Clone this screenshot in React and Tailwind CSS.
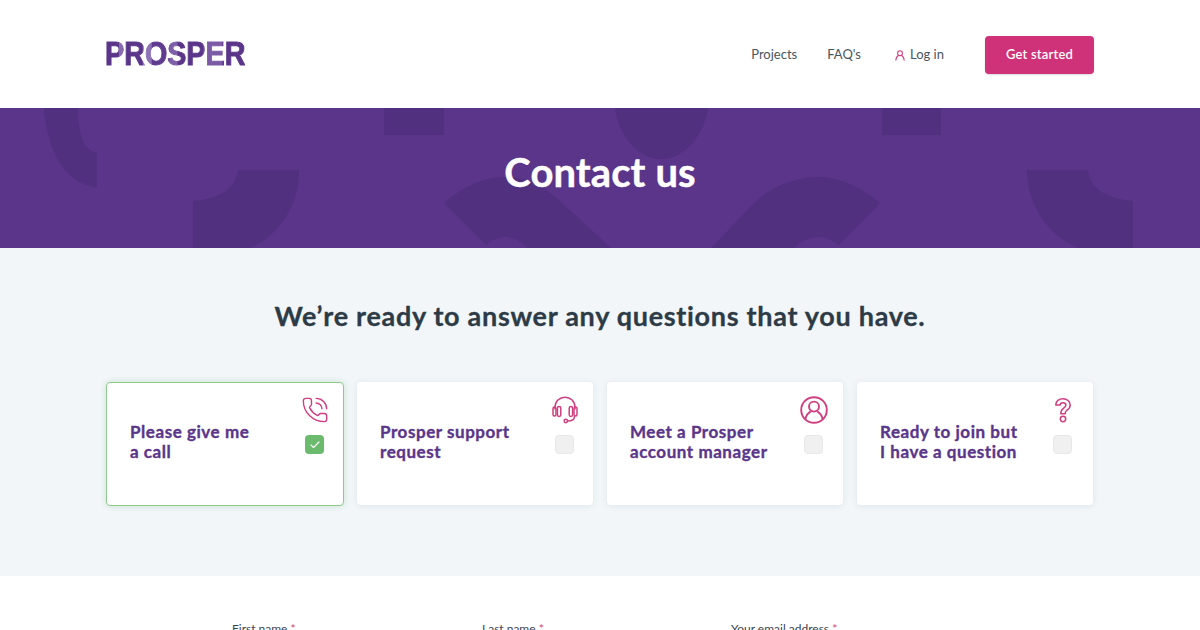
import React from "react";
import { Check, PhoneCall } from "lucide-react";

function Hero() {
  return (
    <section className="relative h-[140px] overflow-hidden bg-[#5a358a] flex items-center justify-center">
      <svg className="absolute left-0 top-0" width="1200" height="140" viewBox="0 108 1200 140" fill="#51307f">
        <path d="M44 108H78C78 130 82 150 97 153V187C65 185 47 150 44 108Z" />
        <path d="M238 170H299C299 205 280 235 250 248H193V201C218 199 236 190 238 170Z" />
        <path d="M384 108H444V135H384Z" />
        <path d="M444 203C462 187 484 177 505 177C530 177 548 190 562 203L611 248H528C520 240 512 237 505 237C498 237 492 240 486 245Z" />
        <path d="M615 108H708C704 135 685 159 661 159C640 159 620 140 615 108Z" />
        <path d="M711 248L757 200C775 185 798 177 818 177C842 177 865 190 880 203L839 245C832 240 825 237 818 237C809 237 801 241 795 248Z" />
        <path d="M882 108H941V135H882Z" />
        <path d="M1027 170H1088C1090 190 1108 199 1133 201V248H1078C1048 235 1027 205 1027 170Z" />
      </svg>
      <h1 className="relative text-white text-[40px] leading-none font-bold -mt-[12px] tracking-[0.1px] [-webkit-text-stroke:0.4px_#ffffff]">Contact us</h1>
    </section>
  );
}

function QuestionIcon() {
  return (
    <svg width="18" height="27" viewBox="0 0 20 28" fill="none" stroke="currentColor" strokeWidth="1.7" strokeLinejoin="round">
      <path d="M2 8C2 3.5 5.5 1 10 1C14.5 1 18 3.8 18 8C18 11 16.2 12.6 14 14C12.6 15 12.4 15.6 12.4 17.5H7.6C7.6 14.6 8.4 13 10.8 11.4C12.4 10.3 13.2 9.4 13.2 8C13.2 6.4 11.8 5.4 10 5.4C8.2 5.4 6.8 6.4 6.8 8Z" />
      <circle cx="10" cy="23.5" r="3" />
    </svg>
  );
}

function HeadsetIcon() {
  return (
    <svg width="26" height="28" viewBox="0 0 26 28" fill="none" stroke="currentColor" strokeWidth="1.5" strokeLinecap="round" strokeLinejoin="round">
      <path d="M3 13V11C3 5.5 7.5 1.2 13 1.2C18.5 1.2 23 5.5 23 11V13" />
      <rect x="1" y="11" width="3" height="9" rx="1.5" />
      <rect x="5.4" y="10.5" width="3.4" height="10" rx="1.7" />
      <rect x="22" y="11" width="3" height="9" rx="1.5" />
      <rect x="17.2" y="10.5" width="3.4" height="10" rx="1.7" />
      <path d="M22.5 20.5C22.5 23.5 20 25 15.5 25" />
      <circle cx="13.8" cy="25" r="1.7" />
    </svg>
  );
}

function UserIcon() {
  return (
    <svg width="28" height="28" viewBox="0 0 28 28" fill="none" stroke="currentColor" strokeWidth="1.9">
      <circle cx="14" cy="14" r="12.8" />
      <circle cx="14" cy="10.6" r="5" />
      <path d="M5.4 23.2C6 18.8 8.8 16.6 10.8 15.4M22.6 23.2C22 18.8 19.2 16.6 17.2 15.4" />
    </svg>
  );
}

function Card({ lines, icon, checked, pad }) {
  return (
    <div
      className={
        "relative rounded-[4px] bg-white pl-[23px] flex justify-between " +
        pad +
        " " +
        (checked
          ? "-mx-px h-[124px] border border-[#8fc98f] shadow-[0_0_6px_rgba(110,185,110,0.3)]"
          : "h-[123px] shadow-[0_1px_6px_rgba(60,80,100,0.1)]")
      }
    >
      <p className={"text-[#5a358a] text-[17px] leading-[20px] font-bold tracking-[0.55px] [-webkit-text-stroke:0.35px_#5a358a] " + (checked ? "pt-[39px]" : "pt-[40px]")}>
        {lines[0]}
        <br />
        {lines[1]}
      </p>
      <div className={"flex flex-col items-center pt-[14px] w-[28px] " + (checked ? "-mt-px" : "")}>
        <div className="h-[28px] w-[28px] flex items-center justify-center text-[#cf3f80]">{icon}</div>
        <div
          className={
            "mt-[11px] h-[19px] w-[19px] rounded-[4px] flex items-center justify-center " +
            (checked ? "bg-[#6cba6e]" : "bg-[#f0f0f0] border border-[#e8e8e8]")
          }
        >
          {checked && <Check size={12} strokeWidth={2.2} className="text-white" />}
        </div>
      </div>
    </div>
  );
}

export default function App() {
  return (
    <div className="h-[630px] overflow-hidden bg-white font-['Lato',sans-serif]">
      <header className="h-[108px] px-[106px] flex items-center justify-between">
        <div className="origin-left scale-x-[0.87] -ml-px text-[33px] leading-none font-bold font-['Liberation_Sans',sans-serif] [-webkit-text-stroke:1px_transparent] bg-[linear-gradient(90deg,#5a358a_0%,#5a358a_10%,#8a6bb0_10%,#8a6bb0_13%,#5a358a_13%,#5a358a_27%,#8f72b5_27%,#8f72b5_33%,#5f3b8f_33%,#5f3b8f_46%,#7f60a8_46%,#7f60a8_52%,#5a358a_52%,#5a358a_70%,#7b5aa6_70%,#7b5aa6_84%,#5a358a_84%,#5a358a_100%)] bg-clip-text text-transparent -mt-[2px]">
          PROSPER
        </div>
        <nav className="mt-[2px] flex items-center text-[13px] text-[#4a5560]">
          <a className="mr-[30px]">Projects</a>
          <a className="mr-[34px]">FAQ's</a>
          <a className="flex items-center gap-[5px] mr-[41px]">
            <svg width="10" height="11" viewBox="0 0 10 11" fill="none" stroke="#cf3f80" strokeWidth="1.1">
              <circle cx="5" cy="3.2" r="2.4" />
              <path d="M0.8 10.5C1 7.8 2.6 5.8 3.4 5.4M9.2 10.5C9 7.8 7.4 5.8 6.6 5.4" />
            </svg>
            Log in
          </a>
          <button className="h-[38px] w-[109px] rounded-[4px] bg-[#d0327a] text-white text-[13px] font-semibold tracking-[0.2px] shadow-[0_1px_2px_rgba(0,0,0,0.15)]">
            Get started
          </button>
        </nav>
      </header>

      <Hero />

      <section className="h-[328px] bg-[#f2f6f9] px-[107px] pt-[51px]">
        <h2 className="text-center text-[27px] leading-[33px] font-bold tracking-[0.7px] text-[#2d3b47] [-webkit-text-stroke:0.3px_#2d3b47]">
          We’re ready to answer any questions that you have.
        </h2>
        <div className="mt-[50px] grid grid-cols-4 gap-[14px]">
          <Card checked pad="pr-[14.5px]" lines={["Please give me", "a call"]} icon={<PhoneCall size={28} strokeWidth={1.2} />} />
          <Card pad="pr-[14.5px]" lines={["Prosper support", "request"]} icon={<HeadsetIcon />} />
          <Card pad="pr-[15.5px]" lines={["Meet a Prosper", "account manager"]} icon={<UserIcon />} />
          <Card pad="pr-[16.5px]" lines={["Ready to join but", "I have a question"]} icon={<QuestionIcon />} />
        </div>
      </section>

      <section className="pl-[232px] pt-[45px] grid grid-cols-[250px_249px_250px] text-[12px] leading-[16px] text-[#3c4650]">
        <label>First name <span className="text-[#cf3f80]">*</span></label>
        <label>Last name <span className="text-[#cf3f80]">*</span></label>
        <label>Your email address <span className="text-[#cf3f80]">*</span></label>
      </section>
    </div>
  );
}
